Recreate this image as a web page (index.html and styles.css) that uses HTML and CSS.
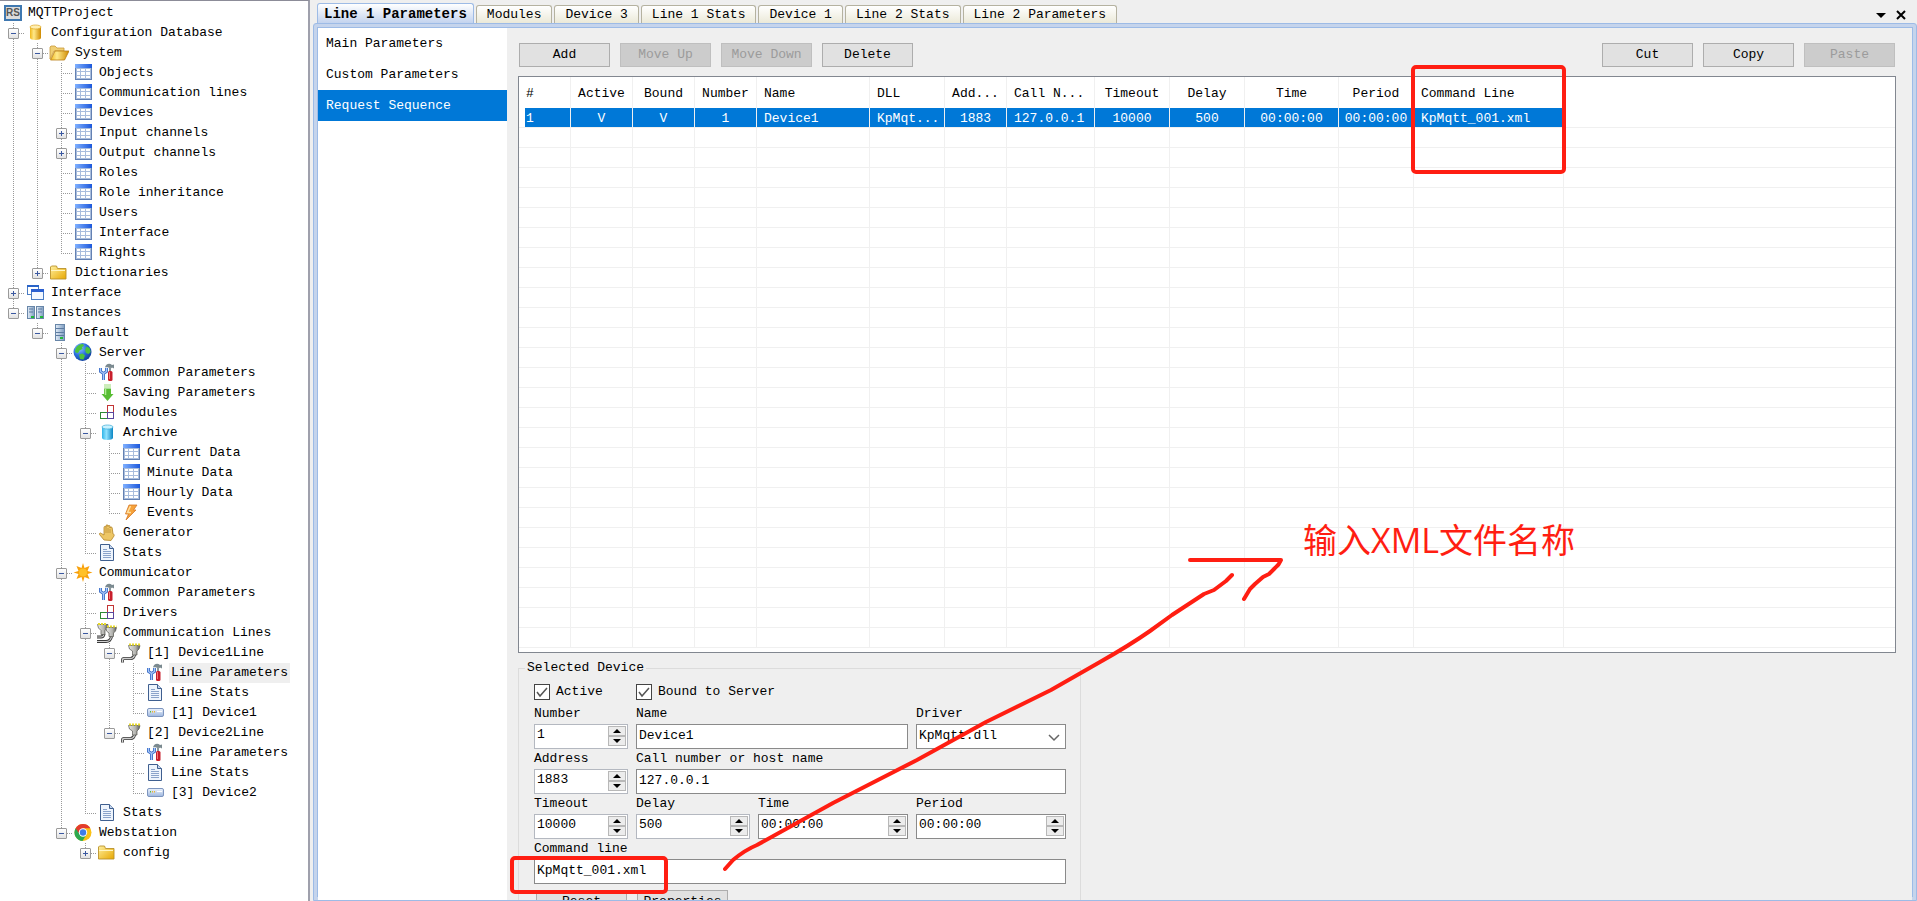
FILE: index.html
```html
<!DOCTYPE html>
<html lang="en">
<head>
  <meta charset="UTF-8">
  <title>MQTTProject</title>
  <link rel="stylesheet" href="styles.css">
</head>
<body>
  <svg class="sprite" aria-hidden="true">
    <defs>
      <linearGradient id="gold" x1="0" x2="1" y1="0" y2="0">
        <stop offset="0" stop-color="#f0b81c"/><stop offset="0.35" stop-color="#ffe98a"/><stop offset="1" stop-color="#cf8a00"/>
      </linearGradient>
      <linearGradient id="folderFill" x1="0" x2="1" y1="0" y2="1">
        <stop offset="0" stop-color="#fff0a0"/><stop offset="1" stop-color="#e8a800"/>
      </linearGradient>
      <linearGradient id="cyan" x1="0" x2="1" y1="0" y2="0">
        <stop offset="0" stop-color="#2fb4e8"/><stop offset="0.4" stop-color="#8fe2ff"/><stop offset="1" stop-color="#0a86c4"/>
      </linearGradient>
      <linearGradient id="head" x1="0" x2="1" y1="0" y2="0">
        <stop offset="0" stop-color="#7fb0ff"/><stop offset="1" stop-color="#1c58dc"/>
      </linearGradient>
      <linearGradient id="steel" x1="0" x2="1" y1="0" y2="0">
        <stop offset="0" stop-color="#e3edf8"/><stop offset="1" stop-color="#7d9cc0"/>
      </linearGradient>
      <linearGradient id="socket" x1="0" x2="1" y1="0" y2="0">
        <stop offset="0" stop-color="#e8e8e8"/><stop offset="0.6" stop-color="#b4b4b0"/><stop offset="1" stop-color="#5c5c58"/>
      </linearGradient>
      <linearGradient id="panel" x1="0" x2="0" y1="0" y2="1">
        <stop offset="0" stop-color="#eef4fc"/><stop offset="1" stop-color="#9db6de"/>
      </linearGradient>
      <radialGradient id="ocean" cx="0.35" cy="0.3" r="0.8">
        <stop offset="0" stop-color="#8cc6ff"/><stop offset="0.5" stop-color="#2a6fdc"/><stop offset="1" stop-color="#0c3791"/>
      </radialGradient>
    </defs>
    <symbol id="i-table" viewBox="0 0 20 20">
      <rect x="2" y="1" width="17" height="16" fill="#6481b2"/>
      <rect x="2" y="1" width="17" height="4" fill="url(#head)"/>
      <rect x="3" y="5" width="15" height="11" fill="#a9bddd"/>
      <path d="M4 6h3v2H4zM8 6h4v2H8zM13 6h4v2h-4zM4 9h3v3H4zM8 9h4v3H8zM13 9h4v3h-4zM4 13h3v2H4zM8 13h4v2H8zM13 13h4v2h-4z" fill="#fff"/>
    </symbol>
    <symbol id="i-database" viewBox="0 0 20 20">
      <path d="M5 4v11c0 2.600 11 2.600 11 0V4z" fill="url(#gold)"/>
      <ellipse cx="10.500" cy="4" rx="5.500" ry="2" fill="#ffeeb0" stroke="#dba520" stroke-width="0.700"/>
    </symbol>
    <symbol id="i-archive" viewBox="0 0 20 20">
      <path d="M5 4v11c0 2.600 11 2.600 11 0V4z" fill="url(#cyan)"/>
      <ellipse cx="10.500" cy="4" rx="5.500" ry="2" fill="#c9f2ff" stroke="#3aa9d6" stroke-width="0.700"/>
    </symbol>
    <symbol id="i-open" viewBox="0 0 20 20">
      <path d="M1 16V4l1-1h4l2 2h7v3H5z" fill="#f0cf74" stroke="#c99a3b" stroke-width="0.800"/>
      <path d="M1.500 17L6 8h14l-4.500 9z" fill="url(#gold)" stroke="#b87b12" stroke-width="0.800"/>
    </symbol>
    <symbol id="i-folder" viewBox="0 0 20 20">
      <path d="M1.500 6V4l1-1h5l1 2.500h8.500V16H1.500z" fill="url(#folderFill)" stroke="#b9912a" stroke-width="0.900"/>
      <path d="M2 7.500h14" stroke="#fff6c4"/>
    </symbol>
    <symbol id="i-windows" viewBox="0 0 20 20">
      <rect x="2.500" y="2.500" width="11" height="9" fill="#fff" stroke="#4a7cc4"/>
      <path d="M2 2h12v2H2z" fill="#2a64c8"/>
      <rect x="6.500" y="6.500" width="12" height="10" fill="#f2f7ff" stroke="#4a7cc4"/>
      <path d="M6 6h13v3H6z" fill="#2a5fd0"/>
    </symbol>
    <symbol id="i-instances" viewBox="0 0 20 20">
      <rect x="2.500" y="3.500" width="7" height="12" fill="url(#steel)" stroke="#6886a8"/>
      <rect x="11.500" y="3.500" width="7" height="12" fill="url(#steel)" stroke="#6886a8"/>
      <path d="M4 6h4M4 9h4M13 6h4M13 9h4" stroke="#5d7ba0"/>
      <path d="M6 13h3v2H6zM15 13h3v2h-3z" fill="#23b83a"/>
    </symbol>
    <symbol id="i-server" viewBox="0 0 20 20">
      <rect x="6.500" y="1.500" width="9" height="16" fill="url(#steel)" stroke="#6886a8"/>
      <path d="M7 5.500h8M7 9.500h8M7 12.500h8" stroke="#5d7ba0"/>
      <path d="M11 14h3v2h-3z" fill="#23b83a"/>
    </symbol>
    <symbol id="i-globe" viewBox="0 0 20 20">
      <circle cx="9.500" cy="9" r="9" fill="url(#ocean)"/>
      <path d="M3 5c2-3 4-4 7-4l1 2-2 1 .500 2-3 1.500-1.500 2.500-2.500-.500L2 8zM13.500 3.500l3 1.500 1.200 4-2.200 2-2.500-1-1-3zM6 11.500l3.500-1 2.500 2-1.500 4-3.500-.500z" fill="#4cc33c"/>
    </symbol>
    <symbol id="i-tools" viewBox="0 0 20 20">
      <path d="M3.500 5v3.500l3 2 3-2V5M6.500 10v7" fill="none" stroke="#3f70c8" stroke-width="3"/>
      <path d="M3.500 5v3.500l3 2 3-2V5M6.500 10v7" fill="none" stroke="#a9c8f8" stroke-width="1.200"/>
      <path d="M8 4.500c.500-3 4-5 7-2.500l2-.500v4l-2-1c-1 1.500-2.500 1.500-3.500 0-1.500-.500-2.500-.500-3.500 0z" fill="#7b8a90"/>
      <path d="M13 4v5" stroke="#8a9598" stroke-width="2"/>
      <rect x="11" y="8" width="4.500" height="10" rx="1.500" fill="#c81f2c"/>
      <path d="M12.500 9v7" stroke="#f27a7a"/>
    </symbol>
    <symbol id="i-save" viewBox="0 0 20 20">
      <path d="M7 2h7M7 4h7" stroke="#9adb78"/>
      <path d="M7 5.500h7V11h2.500L10.500 18 4.500 11H7z" fill="#58bd34"/>
      <path d="M8.500 6v6" stroke="#b2ec94" stroke-width="1.500"/>
    </symbol>
    <symbol id="i-modules" viewBox="0 0 20 20">
      <rect x="10.500" y="2.500" width="6" height="7" fill="#fff" stroke="#c23535"/>
      <rect x="3.500" y="9.500" width="7" height="6" fill="#fff" stroke="#2e8a35"/>
      <rect x="10.500" y="9.500" width="6" height="6" fill="#fff" stroke="#59479c"/>
    </symbol>
    <symbol id="i-bolt" viewBox="0 0 20 20">
      <path d="M8 2h8l-3.500 5H15L5 17l2.500-6H4.500z" fill="#f6a23a" stroke="#d4782a" stroke-width="0.800"/>
      <path d="M9.500 3L6.500 9.500H10" fill="none" stroke="#ffe0a0" stroke-width="1.500"/>
    </symbol>
    <symbol id="i-hand" viewBox="0 0 20 20">
      <path d="M7 17L2.500 11.500c-.500-1.500 1-2 2-1L7 12V4.500c0-1.500 2-1.500 2 0V3c0-1.600 2-1.600 2 0v.500c0-1.500 2-1.500 2 0V5c0-1.500 2.200-1.300 2.200 0l.8 6c1 0 1.500 1 1 2l-3 4.500z" fill="#edc665" stroke="#b3842a" stroke-width="0.800"/>
      <path d="M9 5v5M11 5v5M13 6v4" stroke="#bd8f38" stroke-width="0.800"/>
    </symbol>
    <symbol id="i-doc" viewBox="0 0 20 20">
      <path d="M3.500 1.500h9l4 4v12h-13z" fill="#eef4fc" stroke="#3f5f8f"/>
      <path d="M12.500 1.500v4h4" fill="#c5d6ee" stroke="#3f5f8f"/>
      <path d="M6 6.500h4M6 8.500h8M6 10.500h8M6 12.500h8M6 14.500h8" stroke="#8ba3ca"/>
    </symbol>
    <symbol id="i-sun" viewBox="0 0 20 20">
      <path d="M10 0l1.500 5L16.500 3l-2 5 5 1.500-5 1.500 2 5-5-2-1.500 5-1.500-5-5 2 2-5-5-1.500 5-1.500-2-5 5 2z" fill="#f8a10c"/>
      <circle cx="10" cy="9.500" r="4" fill="#ffc128"/>
    </symbol>
    <symbol id="i-plug" viewBox="0 0 20 20">
      <path d="M1.500 19.500v-2.500q0-1.500 2-1.500h6q3.500 0 4-4" fill="none" stroke="#3a3a3a" stroke-width="3"/>
      <path d="M1.500 19.500v-2.500q0-1.500 2-1.500h6q3.500 0 4-4" fill="none" stroke="#d0d0d0" stroke-width="1.400"/>
      <path d="M7.500 2.500h11.500l-1 3.500-2 2v4h-4.500V8L8.500 6z" fill="url(#socket)" stroke="#55554f" stroke-width="0.700"/>
      <path d="M8 1.500h11" stroke="#e8da28" stroke-width="2" stroke-dasharray="2 1"/>
    </symbol>
    <symbol id="i-plugs" viewBox="0 0 20 20">
      <path d="M0 14h4q2.500 0 3-3M0 18.500h9q4.500 0 5.500-5" fill="none" stroke="#3a3a3a" stroke-width="3"/>
      <path d="M0 14h4q2.500 0 3-3M0 18.500h9q4.500 0 5.500-5" fill="none" stroke="#d0d0d0" stroke-width="1.200"/>
      <path d="M.500 1.500H11l-1 4-2 2v4H4v-4L1.500 5z" fill="url(#socket)" stroke="#55554f" stroke-width="0.700"/>
      <path d="M9 4.500h10.500l-1 3.500-2 2v3.500H12V10L9.500 8z" fill="url(#socket)" stroke="#55554f" stroke-width="0.700"/>
      <path d="M1 1h9M10 3.500h9.500" stroke="#e8da28" stroke-width="2" stroke-dasharray="2 1"/>
    </symbol>
    <symbol id="i-device" viewBox="0 0 20 20">
      <rect x="2.500" y="5.500" width="16" height="8" rx="1.500" fill="url(#panel)" stroke="#7d95bf"/>
      <path d="M5 8h1v1.500H5z" fill="#4cb93f"/><path d="M7 8h1v1.500H7zM9 8h1v1.500H9z" fill="#f2b52c"/><path d="M12 8.500h5" stroke="#fff"/>
    </symbol>
    <symbol id="i-chrome" viewBox="0 0 20 20">
      <circle cx="10" cy="9.500" r="8.500" fill="#fbc116"/>
      <path d="M10 9.500L2.600 5.200A8.500 8.500 0 0 0 9.500 18l4-6.500z" fill="#2da94f"/>
      <path d="M2.600 5.200A8.500 8.500 0 0 1 17.400 5.200H10L6.500 11z" fill="#e33b2e"/>
      <circle cx="10" cy="9.500" r="4.200" fill="#fff"/>
      <circle cx="10" cy="9.500" r="3.200" fill="#3f7de8"/>
    </symbol>
  </svg>

  <aside class="explorer">
    <div class="root"><span class="logo">RS</span><span class="label">MQTTProject</span></div>
    <ul class="tree">
      <li><div class="node"><button class="toggle" aria-label="Toggle"></button><svg><use href="#i-database"/></svg><span class="label">Configuration Database</span></div>
        <ul>
          <li><div class="node"><button class="toggle" aria-label="Toggle"></button><svg><use href="#i-open"/></svg><span class="label">System</span></div>
            <ul>
              <li><div class="node"><svg><use href="#i-table"/></svg><span class="label">Objects</span></div></li>
              <li><div class="node"><svg><use href="#i-table"/></svg><span class="label">Communication lines</span></div></li>
              <li><div class="node"><svg><use href="#i-table"/></svg><span class="label">Devices</span></div></li>
              <li><div class="node"><button class="toggle closed" aria-label="Toggle"></button><svg><use href="#i-table"/></svg><span class="label">Input channels</span></div></li>
              <li><div class="node"><button class="toggle closed" aria-label="Toggle"></button><svg><use href="#i-table"/></svg><span class="label">Output channels</span></div></li>
              <li><div class="node"><svg><use href="#i-table"/></svg><span class="label">Roles</span></div></li>
              <li><div class="node"><svg><use href="#i-table"/></svg><span class="label">Role inheritance</span></div></li>
              <li><div class="node"><svg><use href="#i-table"/></svg><span class="label">Users</span></div></li>
              <li><div class="node"><svg><use href="#i-table"/></svg><span class="label">Interface</span></div></li>
              <li><div class="node"><svg><use href="#i-table"/></svg><span class="label">Rights</span></div></li>
            </ul>
          </li>
          <li><div class="node"><button class="toggle closed" aria-label="Toggle"></button><svg><use href="#i-folder"/></svg><span class="label">Dictionaries</span></div></li>
        </ul>
      </li>
      <li><div class="node"><button class="toggle closed" aria-label="Toggle"></button><svg><use href="#i-windows"/></svg><span class="label">Interface</span></div></li>
      <li><div class="node"><button class="toggle" aria-label="Toggle"></button><svg><use href="#i-instances"/></svg><span class="label">Instances</span></div>
        <ul>
          <li><div class="node"><button class="toggle" aria-label="Toggle"></button><svg><use href="#i-server"/></svg><span class="label">Default</span></div>
            <ul>
              <li><div class="node"><button class="toggle" aria-label="Toggle"></button><svg><use href="#i-globe"/></svg><span class="label">Server</span></div>
                <ul>
                  <li><div class="node"><svg><use href="#i-tools"/></svg><span class="label">Common Parameters</span></div></li>
                  <li><div class="node"><svg><use href="#i-save"/></svg><span class="label">Saving Parameters</span></div></li>
                  <li><div class="node"><svg><use href="#i-modules"/></svg><span class="label">Modules</span></div></li>
                  <li><div class="node"><button class="toggle" aria-label="Toggle"></button><svg><use href="#i-archive"/></svg><span class="label">Archive</span></div>
                    <ul>
                      <li><div class="node"><svg><use href="#i-table"/></svg><span class="label">Current Data</span></div></li>
                      <li><div class="node"><svg><use href="#i-table"/></svg><span class="label">Minute Data</span></div></li>
                      <li><div class="node"><svg><use href="#i-table"/></svg><span class="label">Hourly Data</span></div></li>
                      <li><div class="node"><svg><use href="#i-bolt"/></svg><span class="label">Events</span></div></li>
                    </ul>
                  </li>
                  <li><div class="node"><svg><use href="#i-hand"/></svg><span class="label">Generator</span></div></li>
                  <li><div class="node"><svg><use href="#i-doc"/></svg><span class="label">Stats</span></div></li>
                </ul>
              </li>
              <li><div class="node"><button class="toggle" aria-label="Toggle"></button><svg><use href="#i-sun"/></svg><span class="label">Communicator</span></div>
                <ul>
                  <li><div class="node"><svg><use href="#i-tools"/></svg><span class="label">Common Parameters</span></div></li>
                  <li><div class="node"><svg><use href="#i-modules"/></svg><span class="label">Drivers</span></div></li>
                  <li><div class="node"><button class="toggle" aria-label="Toggle"></button><svg><use href="#i-plugs"/></svg><span class="label">Communication Lines</span></div>
                    <ul>
                      <li><div class="node"><button class="toggle" aria-label="Toggle"></button><svg><use href="#i-plug"/></svg><span class="label">[1] Device1Line</span></div>
                        <ul>
                          <li><div class="node"><svg><use href="#i-tools"/></svg><span class="label current">Line Parameters</span></div></li>
                          <li><div class="node"><svg><use href="#i-doc"/></svg><span class="label">Line Stats</span></div></li>
                          <li><div class="node"><svg><use href="#i-device"/></svg><span class="label">[1] Device1</span></div></li>
                        </ul>
                      </li>
                      <li><div class="node"><button class="toggle" aria-label="Toggle"></button><svg><use href="#i-plug"/></svg><span class="label">[2] Device2Line</span></div>
                        <ul>
                          <li><div class="node"><svg><use href="#i-tools"/></svg><span class="label">Line Parameters</span></div></li>
                          <li><div class="node"><svg><use href="#i-doc"/></svg><span class="label">Line Stats</span></div></li>
                          <li><div class="node"><svg><use href="#i-device"/></svg><span class="label">[3] Device2</span></div></li>
                        </ul>
                      </li>
                    </ul>
                  </li>
                  <li><div class="node"><svg><use href="#i-doc"/></svg><span class="label">Stats</span></div></li>
                </ul>
              </li>
              <li><div class="node"><button class="toggle" aria-label="Toggle"></button><svg><use href="#i-chrome"/></svg><span class="label">Webstation</span></div>
                <ul>
                  <li><div class="node"><button class="toggle closed" aria-label="Toggle"></button><svg><use href="#i-folder"/></svg><span class="label">config</span></div></li>
                </ul>
              </li>
            </ul>
          </li>
        </ul>
      </li>
    </ul>
  </aside>

  <main class="workspace">
    <div class="tabs">
      <button class="tab active">Line 1 Parameters</button>
      <button class="tab">Modules</button>
      <button class="tab">Device 3</button>
      <button class="tab">Line 1 Stats</button>
      <button class="tab">Device 1</button>
      <button class="tab">Line 2 Stats</button>
      <button class="tab">Line 2 Parameters</button>
      <div class="tab-tools">
        <button aria-label="Tab list"><svg viewBox="0 0 12 12"><path d="M1 4h10L6 9z"/></svg></button>
        <button aria-label="Close"><svg viewBox="0 0 12 12"><path d="M2 2l8 8M10 2l-8 8" stroke="#000" stroke-width="2"/></svg></button>
      </div>
    </div>

    <div class="frame">
      <nav class="sections">
        <a href="#">Main Parameters</a>
        <a href="#">Custom Parameters</a>
        <a href="#" class="active">Request Sequence</a>
      </nav>

      <section class="content">
        <div class="toolbar">
          <button class="btn">Add</button>
          <button class="btn" disabled>Move Up</button>
          <button class="btn" disabled>Move Down</button>
          <button class="btn">Delete</button>
          <button class="btn push">Cut</button>
          <button class="btn">Copy</button>
          <button class="btn" disabled>Paste</button>
        </div>

        <div class="grid-box">
          <table class="grid">
            <colgroup>
              <col class="c-num"><col class="c-s"><col class="c-s"><col class="c-s"><col class="c-name"><col class="c-m"><col class="c-s">
              <col class="c-host"><col class="c-m"><col class="c-m"><col class="c-time"><col class="c-m"><col class="c-cmd"><col>
            </colgroup>
            <thead>
              <tr>
                <th class="left">#</th><th>Active</th><th>Bound</th><th>Number</th><th class="left">Name</th><th class="left">DLL</th><th>Add...</th>
                <th class="left">Call N...</th><th>Timeout</th><th>Delay</th><th>Time</th><th>Period</th><th class="left">Command Line</th><th></th>
              </tr>
            </thead>
            <tbody id="rows">
              <tr class="selected">
                <td class="left">1</td><td>V</td><td>V</td><td>1</td><td class="left">Device1</td><td class="left">KpMqt...</td><td>1883</td>
                <td class="left">127.0.0.1</td><td>10000</td><td>500</td><td>00:00:00</td><td>00:00:00</td><td class="left">KpMqtt_001.xml</td><td></td>
              </tr>
            </tbody>
          </table>
        </div>

        <fieldset class="device">
          <legend>Selected Device</legend>
          <div class="checks">
            <label><input type="checkbox" checked> Active</label>
            <label><input type="checkbox" checked> Bound to Server</label>
          </div>
          <div class="fields">
            <div class="field">
              <label for="number">Number</label>
              <div class="spin"><input type="text" id="number" value="1"><span class="arrows"><button aria-label="Up"></button><button class="down" aria-label="Down"></button></span></div>
            </div>
            <div class="field span2">
              <label for="name">Name</label>
              <input type="text" class="box" id="name" value="Device1">
            </div>
            <div class="field">
              <label for="driver">Driver</label>
              <select class="box" id="driver"><option>KpMqtt.dll</option></select>
            </div>
            <div class="field">
              <label for="address">Address</label>
              <div class="spin"><input type="text" id="address" value="1883"><span class="arrows"><button aria-label="Up"></button><button class="down" aria-label="Down"></button></span></div>
            </div>
            <div class="field span3">
              <label for="host">Call number or host name</label>
              <input type="text" class="box" id="host" value="127.0.0.1">
            </div>
            <div class="field">
              <label for="timeout">Timeout</label>
              <div class="spin"><input type="text" id="timeout" value="10000"><span class="arrows"><button aria-label="Up"></button><button class="down" aria-label="Down"></button></span></div>
            </div>
            <div class="field">
              <label for="delay">Delay</label>
              <div class="spin"><input type="text" id="delay" value="500"><span class="arrows"><button aria-label="Up"></button><button class="down" aria-label="Down"></button></span></div>
            </div>
            <div class="field">
              <label for="time">Time</label>
              <div class="spin dark"><input type="text" id="time" value="00:00:00"><span class="arrows"><button aria-label="Up"></button><button class="down" aria-label="Down"></button></span></div>
            </div>
            <div class="field">
              <label for="period">Period</label>
              <div class="spin dark"><input type="text" id="period" value="00:00:00"><span class="arrows"><button aria-label="Up"></button><button class="down" aria-label="Down"></button></span></div>
            </div>
            <div class="field span4">
              <label for="cmd">Command line</label>
              <input type="text" class="box" id="cmd" value="KpMqtt_001.xml">
            </div>
          </div>
          <div class="device-actions">
            <button class="btn">Reset</button>
            <button class="btn">Properties</button>
          </div>
        </fieldset>
      </section>
    </div>
  </main>

  <!-- red pen notes over the window -->
  <svg class="marks" aria-hidden="true">
    <rect x="1413" y="67" width="151" height="105" rx="3"/>
    <rect x="512" y="858" width="154" height="34" rx="3"/>
    <path d="M725 869L733 860Q745 850 757 845L833 803L917 760L986 722L1051 690L1100 662Q1130 645 1150 631L1172 615L1204 594L1214 590L1226 581L1232 575"/>
    <path d="M1190 560H1281Q1279 565 1275 568L1269 574L1263 577L1255 584L1250 589L1244 599"/>
  </svg>
  <div class="note" lang="zh">输入XML文件名称</div>

  <script>
    // fill the rest of the list with empty lines
    const rows = document.getElementById('rows');
    for (let i = 0; i < 26; i++) {
      const tr = rows.insertRow();
      for (let j = 0; j < 14; j++) tr.insertCell();
    }

    document.querySelectorAll('.toggle').forEach(btn => {
      btn.addEventListener('click', () => {
        const list = btn.closest('li').querySelector('ul');
        if (!list) return;
        btn.classList.toggle('closed');
        list.hidden = !list.hidden;
      });
    });
  </script>
</body>
</html>
```
FILE: styles.css
```css
* {
  box-sizing: border-box;
}

body {
  margin: 0;
  height: 100vh;
  display: flex;
  position: relative;
  overflow: hidden;
  background-color: #efefef;
  color: #000;
  font-family: "Liberation Mono", "Noto Sans CJK SC", monospace;
  font-size: 13px;
  line-height: 20px;
}

button, input, select {
  font: inherit;
  color: inherit;
  margin: 0;
  padding: 0;
  border-radius: 0;
}

ul {
  list-style: none;
  margin: 0;
  padding: 0;
}

.sprite {
  position: absolute;
  width: 0;
  height: 0;
}

/* project tree */
.explorer {
  flex: 0 0 310px;
  padding: 2px 0 0 1px;
  background-color: #fff;
  border-top: 1px solid #8c8c98;
  border-right: 2px solid #9fa0ac;
  overflow: hidden;
  white-space: nowrap;
}

.root {
  display: flex;
  align-items: center;
  gap: 4px;
  height: 20px;
  padding-left: 3px;
}

.logo {
  width: 18px;
  height: 16px;
  border: 2px solid #3f78b0;
  background-color: #dcdcdc;
  color: #555;
  font: bold 10px/12px "Liberation Sans", sans-serif;
  text-align: center;
}

.root .label {
  padding-left: 2px;
}

.tree li {
  background: repeating-linear-gradient(#999 0 1px, transparent 1px 2px) 12px 0 / 1px 100% no-repeat;
}

.tree li:last-child {
  background-size: 1px 10px;
}

.tree ul {
  padding-left: 24px;
}

.node {
  display: flex;
  align-items: center;
  height: 20px;
  padding-left: 24px;
  background: repeating-linear-gradient(90deg, #999 0 1px, transparent 1px 2px) 12px 10px / 12px 1px no-repeat;
}

.node svg {
  width: 20px;
  height: 20px;
  flex: none;
}

.toggle {
  width: 11px;
  height: 11px;
  margin: 0 6px 0 -17px;
  border: 1px solid #9a9a9a;
  border-radius: 1px;
  background: linear-gradient(#3a58a0, #3a58a0) center / 5px 1px no-repeat, linear-gradient(#fff, #e2e2e2);
}

.toggle.closed {
  background: linear-gradient(#3a58a0, #3a58a0) center / 5px 1px no-repeat, linear-gradient(#3a58a0, #3a58a0) center / 1px 5px no-repeat, linear-gradient(#fff, #e2e2e2);
}

.label {
  padding: 0 2px;
  margin-left: 4px;
}

.root .label {
  margin-left: 0;
}

.label.current {
  background-color: #efefef;
}

/* document tabs */
.workspace {
  flex: 1;
  min-width: 0;
  display: flex;
  flex-direction: column;
  padding: 3px 0 0 3px;
}

.tabs {
  display: flex;
  align-items: flex-end;
  gap: 2px;
  height: 20px;
  padding-left: 4px;
}

.tab {
  height: 18px;
  padding: 0 10px;
  border: 1px solid #b5b2a0;
  border-bottom: none;
  border-radius: 3px 3px 0 0;
  background: linear-gradient(#fff, #ebe9d8);
  line-height: 16px;
  white-space: nowrap;
}

.tab.active {
  height: 20px;
  padding: 0 6px;
  border-color: #9dbbe6;
  background: linear-gradient(#fff, #c3d3ee);
  font-size: 14px;
  font-weight: bold;
}

.tab-tools {
  display: flex;
  gap: 8px;
  margin-left: auto;
  padding-right: 10px;
}

.tab-tools button {
  width: 12px;
  height: 16px;
  border: none;
  background: none;
}

.tab-tools svg {
  display: block;
  width: 12px;
  height: 12px;
}

.frame {
  flex: 1;
  min-height: 0;
  display: flex;
  border: 1px solid #9dbbe6;
  border-radius: 3px 3px 0 0;
  background-color: #efefef;
  box-shadow: inset 0 0 0 3px #c5d4ec, inset 0 0 0 4px #9dbbe6;
  padding: 4px 4px 0;
  overflow: hidden;
}

.sections {
  flex: 0 0 189px;
  background-color: #fff;
}

.sections a {
  display: block;
  padding-left: 8px;
  color: #000;
  line-height: 31px;
  text-decoration: none;
}

.sections a.active {
  background-color: #0078d7;
  color: #fff;
}

.content {
  flex: 1;
  min-width: 0;
  padding: 15px 16px 0 11px;
  background-color: #efefef;
}

.toolbar {
  display: flex;
  gap: 10px;
  padding: 0 1px;
  margin-bottom: 9px;
}

.btn {
  width: 91px;
  height: 24px;
  border: 1px solid #adadad;
  background-color: #e1e1e1;
  line-height: 20px;
}

.btn:disabled {
  border-color: #bfbfbf;
  background-color: #ccc;
  color: #9b9b9b;
}

.btn.push {
  margin-left: auto;
}

/* request list */
.grid-box {
  padding-bottom: 4px;
  border: 1px solid #828790;
  background-color: #fff;
}

.grid {
  width: 100%;
  table-layout: fixed;
  border-collapse: separate;
  border-spacing: 0;
}

.c-num { width: 52px; }
.c-s { width: 62px; }
.c-m { width: 75px; }
.c-name { width: 113px; }
.c-host { width: 88px; }
.c-time { width: 94px; }
.c-cmd { width: 150px; }

.grid th,
.grid td {
  padding: 2px 5px 0;
  border-right: 1px solid #f0f0f0;
  font-weight: normal;
  text-align: center;
  white-space: nowrap;
}

.grid th {
  height: 31px;
}

.grid td {
  height: 20px;
  border-bottom: 1px solid #f0f0f0;
  line-height: 17px;
}

.grid .left {
  text-align: left;
  padding-left: 7px;
}

.grid th:last-child,
.grid td:last-child {
  border-right: none;
}

.grid .selected td {
  background-color: #0078d7;
  color: #fff;
}

.grid .selected td:first-child {
  background: linear-gradient(#0078d7, #0078d7) 6px 0 no-repeat;
}

.grid .selected td:last-child {
  background: none;
}

/* selected device form */
.device {
  width: 562px;
  margin: 7px 0 0;
  padding: 8px 14px 20px 15px;
  border: 1px solid #dcdcdc;
}

.device legend {
  margin-left: -9px;
  padding: 0 2px;
  line-height: 16px;
}

.checks {
  display: grid;
  grid-template-columns: 94px 1fr;
  gap: 8px;
  margin-bottom: 4px;
}

.checks label {
  display: flex;
  align-items: center;
  gap: 6px;
  height: 16px;
  white-space: nowrap;
}

.checks input {
  appearance: none;
  width: 16px;
  height: 16px;
  border: 1px solid #444;
  background: #fff;
}

.checks input:checked {
  background: #fff url("data:image/svg+xml,%3Csvg xmlns='http://www.w3.org/2000/svg' viewBox='0 0 14 14'%3E%3Cpath d='M2 7l3 4 7-8' fill='none' stroke='%23555' stroke-width='1.500'/%3E%3C/svg%3E") center / 14px 14px no-repeat;
}

.fields {
  display: grid;
  grid-template-columns: 94px 114px 150px 150px;
  column-gap: 8px;
}

.field {
  display: flex;
  flex-direction: column;
}

.field label {
  line-height: 20px;
}

.span2 { grid-column: span 2; }
.span3 { grid-column: span 3; }
.span4 { grid-column: span 4; }

.box {
  width: 100%;
  height: 25px;
  padding: 0 2px 2px;
  border: 1px solid #8a8a8a;
  background-color: #fff;
}

select.box {
  appearance: none;
  background: #fff url("data:image/svg+xml,%3Csvg xmlns='http://www.w3.org/2000/svg' viewBox='0 0 12 12'%3E%3Cpath d='M1 4l5 5 5-5' fill='none' stroke='%23666' stroke-width='1.500'/%3E%3C/svg%3E") right 5px center / 12px 12px no-repeat;
}

.spin {
  display: flex;
  height: 25px;
  padding: 1px 1px 2px;
  border: 1px solid #b4b8c0;
  background-color: #fff;
}

.spin.dark {
  border-color: #8a8a8a;
}

.spin input {
  flex: 1;
  min-width: 0;
  padding: 0 1px 2px;
  border: none;
  background: none;
}

.arrows {
  display: flex;
  flex-direction: column;
  width: 18px;
}

.arrows button {
  flex: 1;
  display: flex;
  align-items: center;
  justify-content: center;
  border: 1px solid #b8b8b8;
  background-color: #ececec;
}

.arrows button::before {
  content: "";
  border: 4px solid transparent;
  border-top: none;
  border-bottom-color: #000;
}

.arrows .down::before {
  border: 4px solid transparent;
  border-bottom: none;
  border-top-color: #000;
}

.device-actions {
  display: flex;
  gap: 10px;
  margin-top: 6px;
  padding-left: 2px;
}

/* pen notes */
.marks {
  position: absolute;
  top: 0;
  left: 0;
  width: 100%;
  height: 100%;
  fill: none;
  stroke: #ff1e12;
  stroke-width: 4px;
  stroke-linecap: round;
  stroke-linejoin: round;
  pointer-events: none;
}

.note {
  position: absolute;
  left: 1303px;
  top: 519px;
  color: #ff1e12;
  font: 34px/42px "Open Sans", "Noto Sans CJK SC", sans-serif;
  pointer-events: none;
}
```
